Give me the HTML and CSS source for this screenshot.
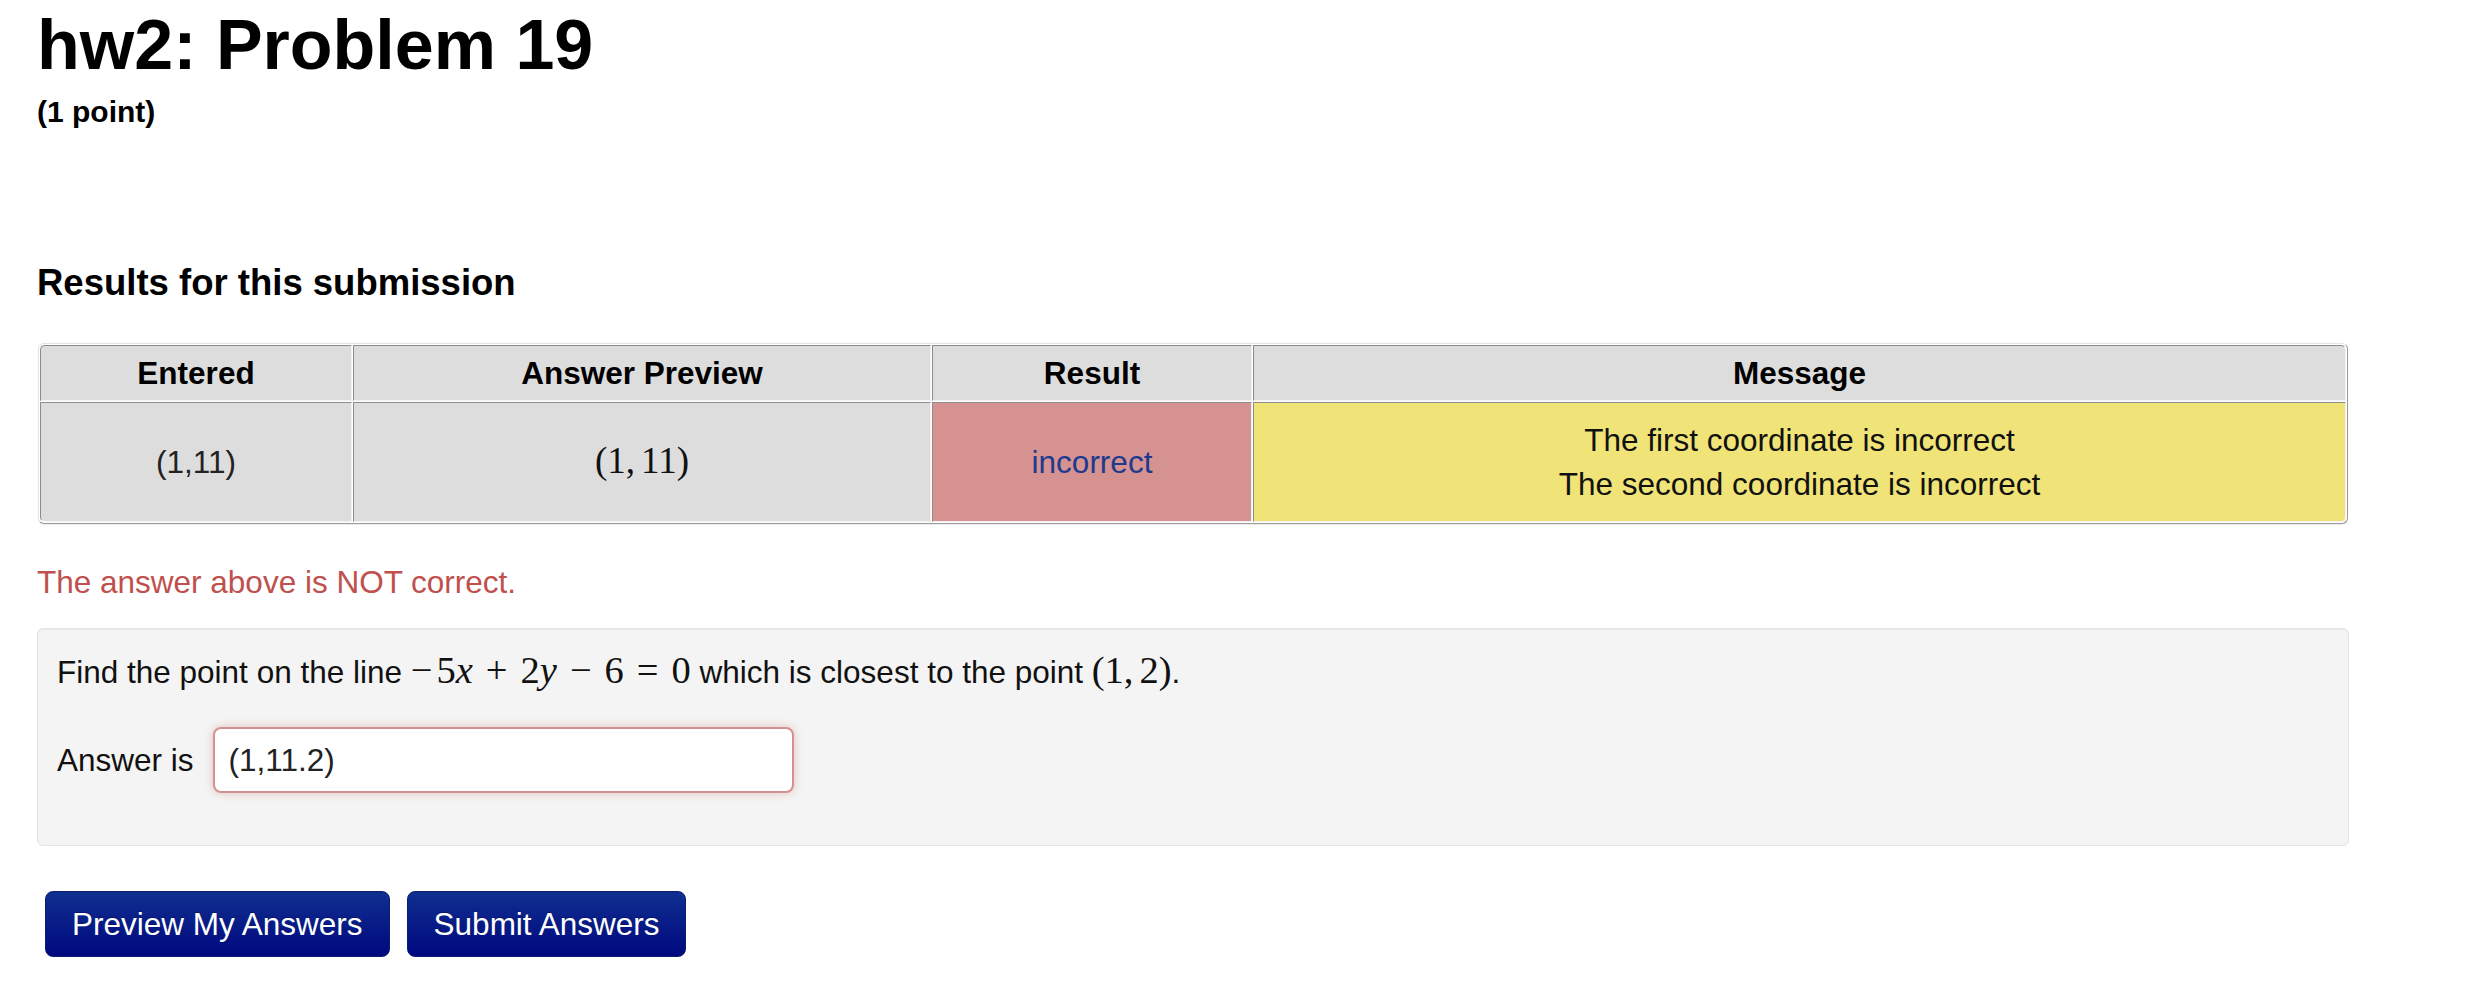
FILE: index.html
```html
<!DOCTYPE html>
<html lang="en">
<head>
<meta charset="utf-8">
<title>hw2: Problem 19</title>
<link rel="stylesheet" href="styles.css">
</head>
<body>
<div class="page">
  <header class="problem-header">
    <h1 class="title">hw2: Problem 19</h1>
    <div class="points">(1 point)</div>
  </header>

  <section class="results">
    <h2 class="results-title">Results for this submission</h2>
    <table class="attempt-results">
      <thead>
        <tr>
          <th class="col-entered">Entered</th>
          <th class="col-preview">Answer Preview</th>
          <th class="col-result">Result</th>
          <th class="col-message">Message</th>
        </tr>
      </thead>
      <tbody>
        <tr>
          <td class="cell-entered">(1,11)</td>
          <td class="cell-preview"><span class="math">(1,<span class="thin"></span>11)</span></td>
          <td class="cell-result">incorrect</td>
          <td class="cell-message">The first coordinate is incorrect<br>The second coordinate is incorrect</td>
        </tr>
      </tbody>
    </table>
    <p class="status-error">The answer above is NOT correct.</p>
  </section>

  <div class="problem-well">
    <p class="problem-text">Find the point on the line <span class="math math-inline"><span class="op-un">−</span>5<i class="mi">x</i><span class="op">+</span>2<i class="mi">y</i><span class="op">−</span>6<span class="rel">=</span>0</span> which is closest to the point <span class="math math-inline">(1,<span class="thin"></span>2)</span>.</p>
    <div class="answer-row">
      <label class="answer-label" for="ans">Answer is</label>
      <input id="ans" class="answer-input" type="text" value="(1,11.2)">
    </div>
  </div>

  <div class="buttons">
    <button class="btn" type="button">Preview My Answers</button>
    <button class="btn" type="button">Submit Answers</button>
  </div>
</div>
</body>
</html>
```

FILE: styles.css
```css
html, body {
  margin: 0;
  padding: 0;
  background: #ffffff;
}

body {
  font-family: "Liberation Sans", Arial, sans-serif;
  font-size: 31.5px;
  line-height: 44px;
  color: #222222;
}

.page {
  padding: 11px 121px 0 37px;
}

.title {
  margin: 0;
  font-size: 70px;
  line-height: 69px;
  font-weight: bold;
  color: #000000;
}

.points {
  margin-top: 17px;
  font-size: 30px;
  line-height: 30px;
  font-weight: bold;
  color: #000000;
}

.results-title {
  margin: 138px 0 0 0;
  font-size: 36.5px;
  line-height: 36px;
  font-weight: bold;
  color: #000000;
}

.attempt-results {
  margin: 42px 1px 0 1px;
  width: 2310px;
  table-layout: fixed;
  border-collapse: separate;
  border-spacing: 1px;
  border-top: 1px solid #e4e4e4;
  border-left: 1px solid #e4e4e4;
  border-right: 1px solid #9a9a9a;
  border-bottom: 1px solid #9a9a9a;
  border-radius: 6px;
  background: #ffffff;
  box-shadow: 0 1px 1px rgba(0, 0, 0, 0.08);
}

.attempt-results th,
.attempt-results td {
  background: #dddddd;
  text-align: center;
  vertical-align: middle;
  border-top: 1px solid #8c8c8c;
  border-left: 1px solid #8c8c8c;
  border-right: 1px solid #f2f2f2;
  border-bottom: 1px solid #f2f2f2;
}

.attempt-results th {
  padding: 5px 8px;
  font-weight: bold;
  color: #000000;
}

.attempt-results td {
  padding: 15px 8px 15px 8px;
  color: #222222;
}

.col-entered { width: 294px; }
.col-preview { width: 560px; }
.col-result { width: 302px; }

.attempt-results thead th.col-entered { border-top-left-radius: 5px; }
.attempt-results thead th.col-message { border-top-right-radius: 5px; }
.attempt-results tbody td.cell-entered { border-bottom-left-radius: 5px; }
.attempt-results tbody td.cell-message { border-bottom-right-radius: 5px; }

.cell-result {
  background: #d69191 !important;
  color: #1c3a8e !important;
}

.cell-message {
  background: #f0e378 !important;
  color: #111111 !important;
}

.math {
  font-family: "Liberation Serif", "Times New Roman", serif;
  font-size: 37px;
  line-height: 40px;
  color: #111111;
  white-space: nowrap;
}

.math-inline {
  font-size: 38.5px;
}

.math .mi {
  font-style: italic;
}

.math .thin {
  display: inline-block;
  width: 6px;
}

.math .op,
.math .rel {
  margin: 0 13px;
}

.math .op-un {
  margin-right: 4px;
}

.status-error {
  margin: 36px 0 0 0;
  color: #c0504d;
}

.problem-well {
  margin: 24px 0 0 0;
  padding: 21px 19px 52px 19px;
  background: #f4f4f4;
  border: 1px solid #e3e3e3;
  border-radius: 6px;
  box-shadow: inset 0 1px 1px rgba(0, 0, 0, 0.05);
}

.problem-text {
  margin: 0;
  color: #111111;
  height: 44px;
}

.answer-row {
  margin-top: 33px;
  display: flex;
  align-items: center;
  gap: 19px;
}

.answer-label {
  color: #111111;
}

.answer-input {
  box-sizing: border-box;
  width: 581px;
  height: 66px;
  margin: 0;
  padding: 0 14px;
  font-family: "Liberation Sans", Arial, sans-serif;
  font-size: 31.5px;
  color: #222222;
  background: #ffffff;
  border: 2px solid #d39292;
  border-radius: 8px;
  box-shadow: 0 0 8px rgba(200, 90, 90, 0.35);
  outline: none;
}

.buttons {
  margin: 45px 0 0 8px;
  display: flex;
  gap: 17px;
}

.btn {
  box-sizing: border-box;
  height: 66px;
  padding: 0 26px;
  font-family: "Liberation Sans", Arial, sans-serif;
  font-size: 31.5px;
  color: #ffffff;
  background: linear-gradient(to bottom, #0f2f8f 0%, #00087f 100%);
  border: 1px solid #0a1f6e;
  border-radius: 8px;
  text-shadow: 0 -1px 0 rgba(0, 0, 0, 0.25);
  cursor: pointer;
}
```
